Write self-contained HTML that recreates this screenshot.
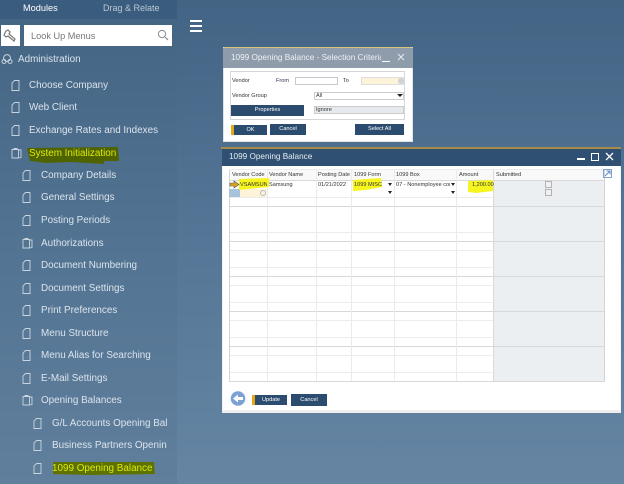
<!DOCTYPE html>
<html><head><meta charset="utf-8"><style>
*{box-sizing:border-box}
html,body{margin:0;padding:0}
html{background:#55769a}
body{width:624px;height:484px;overflow:hidden;position:relative;font-family:"Liberation Sans",sans-serif;background:linear-gradient(180deg,#436484 0%,#557696 50%,#6585a3 100%)}
#wrap{position:absolute;left:0;top:0;width:624px;height:484px;filter:blur(.3px)}
.a{position:absolute}
#side{left:0;top:0;width:177px;height:484px;background:linear-gradient(180deg,#436483 0%,#527392 50%,#607f9d 100%)}
.m{position:absolute;font-size:9.9px;line-height:12px;color:#dbe4ec;white-space:nowrap}
.ic{position:absolute;width:9px;height:11px}
.t{position:absolute;font-size:5.6px;line-height:8px;color:#333;white-space:nowrap}
.btn{position:absolute;background:#2b4c6f;color:#fff;font-size:5.6px;text-align:center;white-space:nowrap}
.h{position:absolute;left:229px;width:376px;height:1px;background:#ececec}
.h.d{background:#d8d8d8}
.h.f{background:#f6f6f6}
.v{position:absolute;top:170px;height:211px;width:1px;background:#ebebeb}
</style></head><body><div id="wrap">
<svg width="0" height="0" style="position:absolute"><defs>
<symbol id="p" viewBox="0 0 9 11"><path d="M3.500 .5H8V10.500H1V3Z" fill="none" stroke="#c9d4de" stroke-width=".9"/></symbol>
<symbol id="q" viewBox="0 0 11 11"><path d="M1 1.500H7.500V10H1ZM3 1.500V.5H6V1.500M7.500 2H10V9.500L8 10" fill="none" stroke="#c9d4de" stroke-width=".9"/></symbol>
</defs></svg>
<div class="a" id="side"></div>
<div class="a" style="left:0;top:0;width:177px;height:19px;background:#3a5c7e"></div>
<div class="m" style="left:23px;top:2px;color:#fff;font-size:9.2px">Modules</div>
<div class="m" style="left:103px;top:2px;color:#b9c7d4;font-size:9px">Drag &amp; Relate</div>

<div class="a" style="left:1px;top:25px;width:19px;height:21px;background:#fff"></div>
<svg class="a" style="left:3px;top:28px" width="15" height="15" viewBox="0 0 15 15"><path d="M3 3l2-1 2 2-1 2 6 5-1 2-6-5-2 1-2-2z" fill="none" stroke="#777" stroke-width="1.2"/></svg>
<div class="a" style="left:24px;top:25px;width:148px;height:21px;background:#fff"></div>
<div class="a" style="left:31px;top:30px;font-size:9.2px;line-height:12px;color:#777;white-space:nowrap">Look Up Menus</div>
<svg class="a" style="left:157px;top:29px" width="12" height="12" viewBox="0 0 12 12"><circle cx="5" cy="5" r="3.600" fill="none" stroke="#888"/><path d="M8 8l3 3" stroke="#888" stroke-width="1.2"/></svg>

<svg class="a" style="left:1px;top:53px" width="12" height="12" viewBox="0 0 12 12"><circle cx="6" cy="5" r="3.400" fill="none" stroke="#c9d4de"/><circle cx="3" cy="8.500" r="2" fill="none" stroke="#c9d4de"/><circle cx="9" cy="8.500" r="2" fill="none" stroke="#c9d4de"/></svg>
<div class="m" style="left:18px;top:54px">Administration</div>

<svg class="ic" style="left:11px;top:80px"><use href="#p"/></svg><div class="m" style="left:29px;top:80px">Choose Company</div>
<svg class="ic" style="left:11px;top:102px"><use href="#p"/></svg><div class="m" style="left:29px;top:102px">Web Client</div>
<svg class="ic" style="left:11px;top:125px"><use href="#p"/></svg><div class="m" style="left:29px;top:125px">Exchange Rates and Indexes</div>

<svg class="a" style="left:26px;top:145px" width="94" height="22" viewBox="0 0 94 22"><path d="M1 3L92 2L93 16L78 16L78 19L45 17L20 18L4 16Z" fill="#4f6400"/></svg>
<svg class="ic" style="left:11px;top:148px;width:11px"><use href="#q"/></svg><div class="m" style="left:29px;top:148px;color:#dde80a">System Initialization</div>

<svg class="ic" style="left:22px;top:170px"><use href="#p"/></svg><div class="m" style="left:41px;top:170px">Company Details</div>
<svg class="ic" style="left:22px;top:192px"><use href="#p"/></svg><div class="m" style="left:41px;top:192px">General Settings</div>
<svg class="ic" style="left:22px;top:215px"><use href="#p"/></svg><div class="m" style="left:41px;top:215px">Posting Periods</div>
<svg class="ic" style="left:22px;top:238px;width:11px"><use href="#q"/></svg><div class="m" style="left:41px;top:238px">Authorizations</div>
<svg class="ic" style="left:22px;top:260px"><use href="#p"/></svg><div class="m" style="left:41px;top:260px">Document Numbering</div>
<svg class="ic" style="left:22px;top:283px"><use href="#p"/></svg><div class="m" style="left:41px;top:283px">Document Settings</div>
<svg class="ic" style="left:22px;top:305px"><use href="#p"/></svg><div class="m" style="left:41px;top:305px">Print Preferences</div>
<svg class="ic" style="left:22px;top:328px"><use href="#p"/></svg><div class="m" style="left:41px;top:328px">Menu Structure</div>
<svg class="ic" style="left:22px;top:350px"><use href="#p"/></svg><div class="m" style="left:41px;top:350px">Menu Alias for Searching</div>
<svg class="ic" style="left:22px;top:373px"><use href="#p"/></svg><div class="m" style="left:41px;top:373px">E-Mail Settings</div>
<svg class="ic" style="left:22px;top:395px;width:11px"><use href="#q"/></svg><div class="m" style="left:41px;top:395px">Opening Balances</div>
<svg class="ic" style="left:33px;top:418px"><use href="#p"/></svg><div class="m" style="left:52px;top:418px;width:115px;overflow:hidden">G/L Accounts Opening Balances</div>
<svg class="ic" style="left:33px;top:440px"><use href="#p"/></svg><div class="m" style="left:52px;top:440px;width:115px;overflow:hidden">Business Partners Opening Balances</div>
<svg class="a" style="left:50px;top:460px" width="108" height="18" viewBox="0 0 108 18"><path d="M3 2L104 2L105 14L40 15L3 14Z" fill="#5d7200"/></svg>
<svg class="ic" style="left:33px;top:463px"><use href="#p"/></svg><div class="m" style="left:52px;top:463px;color:#dde80a">1099 Opening Balance</div>

<div class="a" style="left:190px;top:20px;width:12px;height:2px;background:#fff"></div>
<div class="a" style="left:190px;top:25px;width:12px;height:2px;background:#fff"></div>
<div class="a" style="left:190px;top:30px;width:12px;height:2px;background:#fff"></div>

<!-- Selection dialog -->
<div class="a" style="left:223px;top:47px;width:190px;height:95px;background:#fff;border:1px solid #dfe3e6;border-top:1px solid #d8c77a"></div>
<div class="a" style="left:223px;top:48px;width:190px;height:20px;background:#8e9cab"></div>
<div class="a" style="left:231px;top:52px;width:150px;overflow:hidden;font-size:8.2px;line-height:12px;color:#eef1f4;white-space:nowrap">1099 Opening Balance - Selection Criteria</div>
<div class="a" style="left:382px;top:61px;width:8px;height:1px;background:#fff"></div>
<svg class="a" style="left:397px;top:53px" width="8" height="8" viewBox="0 0 8 8"><path d="M1 1l6 6M7 1l-6 6" stroke="#e8ecef" stroke-width="1"/></svg>
<div class="a" style="left:230px;top:71px;width:175px;height:49px;border:1px solid #d6d6d6;background:#fff"></div>
<div class="t" style="left:232px;top:77px">Vendor</div>
<div class="t" style="left:276px;top:77px;color:#3b2b5c">From</div>
<div class="a" style="left:295px;top:77px;width:43px;height:8px;border:1px solid #c9c9c9;background:#fff"></div>
<div class="t" style="left:343px;top:77px">To</div>
<div class="a" style="left:361px;top:77px;width:43px;height:8px;border:1px solid #ddd;background:#fdf3d8"></div>
<div class="a" style="left:398px;top:78px;width:6px;height:6px;border-radius:50%;background:#cdd3d8"></div>
<div class="t" style="left:232px;top:92px">Vendor Group</div>
<div class="a" style="left:314px;top:92px;width:90px;height:8px;border:1px solid #ccc;background:#fff"></div>
<div class="t" style="left:316px;top:92px">All</div>
<div class="a" style="left:397px;top:94px;border-left:3px solid transparent;border-right:3px solid transparent;border-top:3px solid #222"></div>
<div class="btn" style="left:231px;top:105px;width:73px;height:11px;line-height:11px">Properties</div>
<div class="a" style="left:314px;top:106px;width:90px;height:8px;border:1px solid #ccc;background:#e6eaee"></div>
<div class="t" style="left:316px;top:106px">Ignore</div>
<div class="btn" style="left:231px;top:125px;width:36px;height:10px;line-height:10px;border-left:3px solid #e6a817">OK</div>
<div class="btn" style="left:270px;top:124px;width:36px;height:11px;line-height:11px">Cancel</div>
<div class="btn" style="left:355px;top:124px;width:49px;height:11px;line-height:11px">Select All</div>

<!-- Main window -->
<div class="a" style="left:221px;top:147px;width:400px;height:2px;background:#a68c47"></div>
<div class="a" style="left:222px;top:149px;width:399px;height:264px;background:#fff;border:1px solid #f3f3f3;border-bottom:3px solid #eee"></div>
<div class="a" style="left:222px;top:149px;width:399px;height:17px;background:#2f5073"></div>
<div class="a" style="left:229px;top:151px;font-size:8.2px;line-height:12px;color:#e6ebf0;white-space:nowrap">1099 Opening Balance</div>
<div class="a" style="left:577px;top:158px;width:8px;height:2px;background:#fff"></div>
<div class="a" style="left:591px;top:153px;width:8px;height:8px;border:1px solid #fff"></div>
<svg class="a" style="left:605px;top:152px" width="9" height="9" viewBox="0 0 9 9"><path d="M1 1l7 7M8 1l-7 7" stroke="#fff" stroke-width="1.3"/></svg>

<div class="a" style="left:493px;top:180px;width:112px;height:201px;background:#eceff2"></div>
<div class="a" style="left:229px;top:170px;width:376px;height:10px;background:#f9f9f9"></div>
<div class="h" style="top:169px"></div>
<div class="h d" style="top:180px"></div>
<div class="h" style="top:197px"></div><div class="h d" style="top:206px"></div><div class="h" style="top:232px"></div><div class="h d" style="top:241px"></div><div class="h" style="top:250px"></div><div class="h" style="top:267px"></div><div class="h d" style="top:276px"></div><div class="h" style="top:285px"></div><div class="h" style="top:302px"></div><div class="h d" style="top:311px"></div><div class="h" style="top:320px"></div><div class="h" style="top:337px"></div><div class="h d" style="top:346px"></div><div class="h" style="top:355px"></div><div class="h" style="top:372px"></div><div class="h d" style="top:381px"></div>
<div class="v" style="left:229px;background:#d4d4d4"></div><div class="v" style="left:267px"></div><div class="v" style="left:316px"></div><div class="v" style="left:351px"></div><div class="v" style="left:394px"></div><div class="v" style="left:456px"></div><div class="v" style="left:493px;background:#dadada"></div><div class="v" style="left:604px;background:#d4d4d4"></div>

<div class="t" style="left:232px;top:171px">Vendor Code</div><div class="t" style="left:269px;top:171px">Vendor Name</div><div class="t" style="left:318px;top:171px">Posting Date</div><div class="t" style="left:354px;top:171px">1099 Form</div><div class="t" style="left:396px;top:171px">1099 Box</div><div class="t" style="left:459px;top:171px">Amount</div><div class="t" style="left:496px;top:171px">Submitted</div>
<svg class="a" style="left:603px;top:169px" width="9" height="9" viewBox="0 0 9 9"><rect x=".5" y=".5" width="8" height="8" fill="none" stroke="#7fa3cc"/><path d="M2 7l4.500-4.500M3.500 2h3.500v3.500" stroke="#5d8ac0" fill="none"/></svg>

<div class="a" style="left:229px;top:189px;width:11px;height:8px;background:#a9c2dc"></div>
<div class="a" style="left:240px;top:189px;width:27px;height:8px;background:#fdf3d8"></div>
<div class="a" style="left:260px;top:190px;width:6px;height:6px;border-radius:50%;border:1px solid #b5bdc5"></div>
<svg class="a" style="left:238px;top:178px" width="32" height="13" viewBox="0 0 32 13"><path d="M1 1L31 0L31 9L20 10L1 12Z" fill="#f7f51f"/></svg>
<svg class="a" style="left:352px;top:178px" width="31" height="14" viewBox="0 0 31 14"><path d="M1 2L29 0L30 9L14 12L1 13Z" fill="#f7f51f"/></svg>
<svg class="a" style="left:466px;top:180px" width="28" height="14" viewBox="0 0 28 14"><path d="M2 1L27 0L27 11L10 13L2 12Z" fill="#f7f51f"/></svg>
<svg class="a" style="left:229px;top:180px" width="11" height="9" viewBox="0 0 11 9"><path d="M1 3h4V1l5 3.500-5 3.500V6H1z" fill="#d9a520" stroke="#555" stroke-width=".6"/></svg>
<div class="t" style="left:240px;top:181px;width:27px;overflow:hidden">VSAMSUNG</div>
<div class="t" style="left:269px;top:181px">Samsung</div>
<div class="t" style="left:318px;top:181px">01/21/2022</div>
<div class="t" style="left:354px;top:181px">1099 MISC</div>
<div class="t" style="left:396px;top:181px;width:54px;overflow:hidden">07 - Nonemployee compensation</div>
<div class="t" style="left:472px;top:181px">1,200.00</div>
<div class="a" style="left:388px;top:183px;border-left:2px solid transparent;border-right:2px solid transparent;border-top:3px solid #222"></div>
<div class="a" style="left:388px;top:191px;border-left:2px solid transparent;border-right:2px solid transparent;border-top:3px solid #222"></div>
<div class="a" style="left:451px;top:183px;border-left:2px solid transparent;border-right:2px solid transparent;border-top:3px solid #222"></div>
<div class="a" style="left:451px;top:191px;border-left:2px solid transparent;border-right:2px solid transparent;border-top:3px solid #222"></div>
<div class="a" style="left:545px;top:181px;width:7px;height:7px;border:1px solid #b3b3b3;background:#eef0f2"></div>
<div class="a" style="left:545px;top:189px;width:7px;height:7px;border:1px solid #b3b3b3;background:#eef0f2"></div>

<svg class="a" style="left:230px;top:391px" width="16" height="15" viewBox="0 0 16 15"><circle cx="8" cy="7.500" r="7.300" fill="#7ba2d2"/><path d="M3 7.500l5-4v2.500h5v3H8v2.500z" fill="#fff"/></svg>
<div class="btn" style="left:252px;top:395px;width:35px;height:10px;line-height:10px;border-left:3px solid #e6a817">Update</div>
<div class="btn" style="left:291px;top:394px;width:36px;height:12px;line-height:12px">Cancel</div>
</div></body></html>
